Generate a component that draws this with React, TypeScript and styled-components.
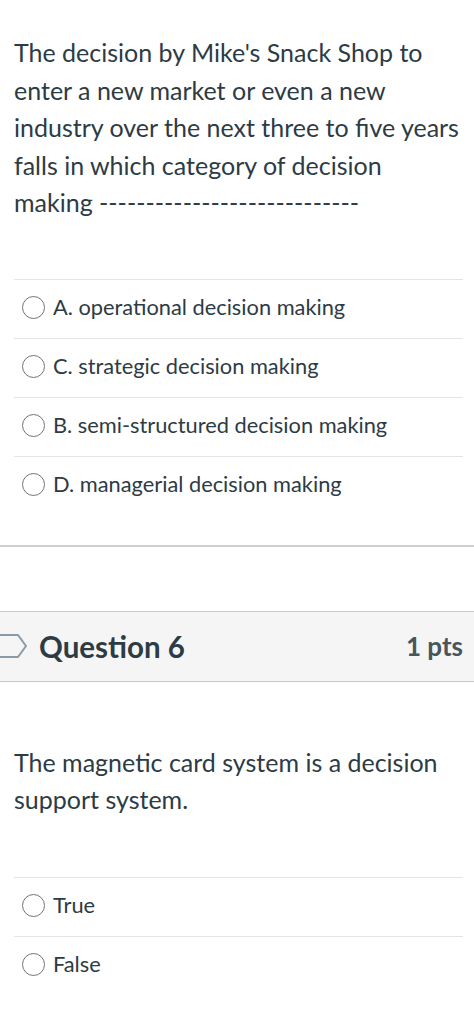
import React from "react";
import styled, { createGlobalStyle } from "styled-components";

const GlobalStyle = createGlobalStyle`
  html, body {
    margin: 0;
    padding: 0;
    background: #ffffff;
  }
  body {
    font-family: Lato, "Open Sans", "Liberation Sans", sans-serif;
    color: #2d3b45;
  }
`;

const Page = styled.div`
  width: 474px;
  min-height: 1014px;
  overflow: hidden;
`;

const QuestionBody = styled.div<{ top: number; bottom: number }>`
  padding: ${(p) => p.top}px 11px ${(p) => p.bottom}px 14px;
`;

const QuestionText = styled.p`
  margin: 0;
  font-size: 25px;
  line-height: 37.5px;
  color: #2d3b45;
`;

const Answers = styled.div<{ gap: number }>`
  margin-top: ${(p) => p.gap}px;
`;

const AnswerRow = styled.label`
  box-sizing: border-box;
  display: flex;
  align-items: center;
  gap: 8px;
  height: 59px;
  border-top: 1px solid #e4e4e4;
  padding: 0 0 5px 8px;
  font-size: 21.8px;
  color: #2d3b45;
`;

const Radio = styled.span`
  width: 21px;
  height: 21px;
  margin-top: 3px;
  border-radius: 50%;
  border: 1.5px solid #6f7478;
  flex-shrink: 0;
`;

const Divider = styled.hr`
  margin: 0;
  border: 0;
  border-top: 2px solid #cfcfcf;
`;

const Header = styled.div`
  margin-top: 64px;
  height: 69px;
  background: #f5f5f5;
  border-top: 1px solid #c8c8c8;
  border-bottom: 1px solid #c8c8c8;
  display: flex;
  align-items: center;
  justify-content: space-between;
  padding-right: 11px;
`;

const HeaderLeft = styled.div`
  display: flex;
  align-items: center;
  gap: 11px;
`;

const Flag = styled.svg`
  width: 28px;
  height: 26px;
  display: block;
`;

const Title = styled.h2`
  margin: 0;
  font-size: 29.5px;
  font-weight: 700;
  color: #2d3b45;
`;

const Points = styled.span`
  font-size: 26px;
  font-weight: 700;
  color: #4a545b;
`;

function Answer({ label }: { label: string }) {
  return (
    <AnswerRow>
      <Radio />
      {label}
    </AnswerRow>
  );
}

export default function App() {
  return (
    <Page>
      <GlobalStyle />
      <QuestionBody top={34} bottom={30}>
        <QuestionText>
          The decision by Mike's Snack Shop to enter a new market or even a new
          industry over the next three to five years falls in which category of
          decision making ----------------------------
        </QuestionText>
        <Answers gap={57}>
          <Answer label="A. operational decision making" />
          <Answer label="C. strategic decision making" />
          <Answer label="B. semi-structured decision making" />
          <Answer label="D. managerial decision making" />
        </Answers>
      </QuestionBody>
      <Divider />
      <Header>
        <HeaderLeft>
          <Flag viewBox="0 0 28 26">
            <path
              d="M-4 2 H18 L26 13 L18 24 H-4"
              fill="none"
              stroke="#8a9aa6"
              strokeWidth="2"
              strokeLinejoin="round"
            />
          </Flag>
          <Title>Question 6</Title>
        </HeaderLeft>
        <Points>1 pts</Points>
      </Header>
      <QuestionBody top={62} bottom={40}>
        <QuestionText>
          The magnetic card system is a decision support system.
        </QuestionText>
        <Answers gap={58}>
          <Answer label="True" />
          <Answer label="False" />
        </Answers>
      </QuestionBody>
    </Page>
  );
}
